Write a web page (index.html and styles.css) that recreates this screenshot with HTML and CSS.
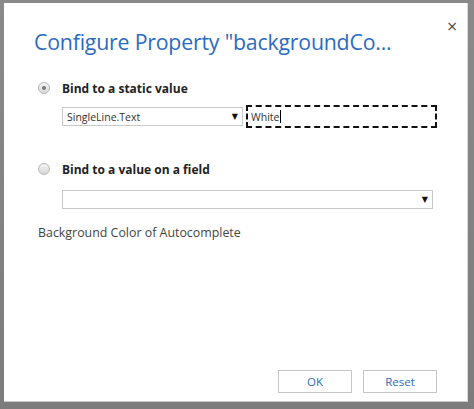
FILE: index.html
```html
<!DOCTYPE html>
<html>
<head>
<meta charset="utf-8">
<link rel="stylesheet" href="styles.css">
</head>
<body>
<div class="frame">
  <div class="dialog">
    <div class="header">
      <h1 class="title">Configure Property "backgroundCo...</h1>
      <span class="close">×</span>
    </div>
    <div class="content">
      <div class="option">
        <span class="radio checked"></span>
        <span class="label">Bind to a static value</span>
      </div>
      <div class="row">
        <div class="select small"><span class="sel-text">SingleLine.Text</span><span class="arrow">▼</span></div>
        <div class="input">White<span class="caret"></span></div>
      </div>
      <div class="option second">
        <span class="radio"></span>
        <span class="label">Bind to a value on a field</span>
      </div>
      <div class="row">
        <div class="select wide"><span class="sel-text"></span><span class="arrow">▼</span></div>
      </div>
      <p class="desc">Background Color of Autocomplete</p>
    </div>
    <div class="footer">
      <button class="btn">OK</button>
      <button class="btn">Reset</button>
    </div>
  </div>
</div>
</body>
</html>
```
FILE: styles.css
```css
html, body {
  margin: 0;
  padding: 0;
}
body {
  width: 474px;
  height: 409px;
  overflow: hidden;
  font-family: "Open Sans", "Noto Sans", sans-serif;
}
.frame {
  width: 474px;
  height: 409px;
  box-sizing: border-box;
  padding: 3px 6px 7px 4px;
  background: linear-gradient(to bottom, #8a8a8a, #7c7c7c);
}
.dialog {
  width: 100%;
  height: 100%;
  background: #fff;
  box-sizing: border-box;
  border-right: 1px solid #d8d8d8;
  border-bottom: 1px solid #c8c8c8;
  display: flex;
  flex-direction: column;
}
.header {
  position: relative;
  padding: 25px 0 0 30px;
  height: 60px;
  box-sizing: border-box;
}
.title {
  margin: 0;
  font-weight: 400;
  font-size: 21.3px;
  line-height: 28px;
  color: #2b6cbf;
  letter-spacing: -0.2px;
}
.close {
  position: absolute;
  right: 9px;
  top: 14px;
  font-size: 14px;
  line-height: 18px;
  color: #444;
  font-family: "DejaVu Sans", sans-serif;
}
.content {
  padding: 17px 0 0 34px;
}
.option {
  display: flex;
  align-items: center;
  height: 16px;
}
.option.second {
  margin-top: 33px;
}
.radio {
  width: 10px;
  height: 10px;
  border-radius: 50%;
  border: 1px solid #b8b8b8;
  background: linear-gradient(#f4f4f4, #d8d8d8);
  margin-left: 0;
  margin-right: 12px;
  position: relative;
  box-sizing: content-box;
}
.radio.checked::after {
  content: "";
  position: absolute;
  left: 3px;
  top: 3px;
  width: 4px;
  height: 4px;
  border-radius: 50%;
  background: #777;
}
.label {
  font-weight: 700;
  font-size: 12px;
  color: #222;
}
.row {
  display: flex;
  align-items: center;
  margin-top: 9px;
  padding-left: 24px;
}
.select {
  height: 19px;
  box-sizing: border-box;
  border: 1px solid #c8c8c8;
  display: flex;
  align-items: center;
  justify-content: space-between;
  padding: 0 4px 0 4px;
  font-size: 10.5px;
  color: #333;
}
.select.small {
  width: 181px;
}
.select.wide {
  width: 371px;
  margin-top: 4px;
}
.arrow {
  font-size: 8px;
  color: #111;
  font-family: "DejaVu Sans", sans-serif;
}
.input {
  margin-left: 3px;
  width: 191px;
  height: 23px;
  box-sizing: border-box;
  border: 2px dashed #111;
  padding: 0 3px;
  display: flex;
  align-items: center;
  font-size: 10.5px;
  color: #333;
}
.caret {
  display: inline-block;
  width: 1px;
  height: 13px;
  background: #000;
  margin-left: 1px;
}
.desc {
  margin: 15px 0 0 0;
  font-size: 12.4px;
  color: #444;
}
.footer {
  margin-top: auto;
  display: flex;
  justify-content: flex-end;
  gap: 11px;
  padding: 0 30px 8px 0;
}
.btn {
  width: 74px;
  height: 23px;
  background: #fff;
  border: 1px solid #c6c6c6;
  color: #2b6cbf;
  font-family: "Open Sans", sans-serif;
  font-size: 11.5px;
  padding: 0;
}
```
